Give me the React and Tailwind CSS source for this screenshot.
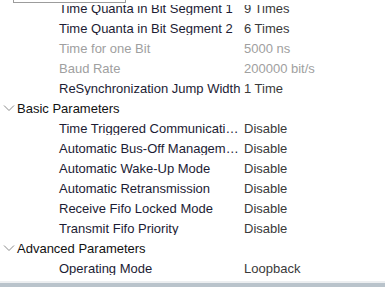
import React from "react";

const Chevron = () => (
  <svg width="12" height="8" viewBox="0 0 12 8" className="shrink-0">
    <polyline points="1,1.5 6,6.5 11,1.5" fill="none" stroke="#8a8a8a" strokeWidth="1" />
  </svg>
);

const Row = ({ label, value, disabled }) => (
  <div className="flex h-5 items-center">
    <div className={`w-[244px] shrink-0 pl-[59px] pr-[2px] overflow-hidden whitespace-nowrap text-ellipsis ${disabled ? "text-[#a0a0a0]" : "text-[#1c1c34]"}`}>
      {label}
    </div>
    <div className={`whitespace-nowrap ${disabled ? "text-[#a0a0a0]" : "text-[#3a3a3a]"}`}>{value}</div>
  </div>
);

const Group = ({ title }) => (
  <div className="flex h-5 items-center">
    <div className="w-[17px] flex justify-center pl-[1px]">
      <Chevron />
    </div>
    <span className="text-[#111111] whitespace-nowrap">{title}</span>
  </div>
);

export default function App() {
  return (
    <div
      className="relative w-[385px] h-[287px] overflow-hidden bg-white flex flex-col text-[13px] leading-none"
      style={{ fontFamily: '"Liberation Sans", Arial, sans-serif' }}
    >
      <div className="h-[281px] overflow-hidden">
        <div className="-mt-[2px] flex flex-col">
          <Row label="Time Quanta in Bit Segment 1" value="9 Times" />
          <Row label="Time Quanta in Bit Segment 2" value="6 Times" />
          <Row label="Time for one Bit" value="5000 ns" disabled />
          <Row label="Baud Rate" value="200000 bit/s" disabled />
          <Row label="ReSynchronization Jump Width" value="1 Time" />
          <Group title="Basic Parameters" />
          <Row label="Time Triggered Communication Mode" value="Disable" />
          <Row label="Automatic Bus-Off Management" value="Disable" />
          <Row label="Automatic Wake-Up Mode" value="Disable" />
          <Row label="Automatic Retransmission" value="Disable" />
          <Row label="Receive Fifo Locked Mode" value="Disable" />
          <Row label="Transmit Fifo Priority" value="Disable" />
          <Group title="Advanced Parameters" />
          <Row label="Operating Mode" value="Loopback" />
        </div>
      </div>
      <div className="h-[2px] bg-[#eceef0]" />
      <div className="flex-1 bg-[#b9c3cb]" />
      <div className="absolute left-0 top-0 w-full h-[5px] bg-white" />
      <div className="absolute left-[13px] top-[-12px] w-[113px] h-[15px] border border-[#9c9c9c] bg-white" />
    </div>
  );
}
